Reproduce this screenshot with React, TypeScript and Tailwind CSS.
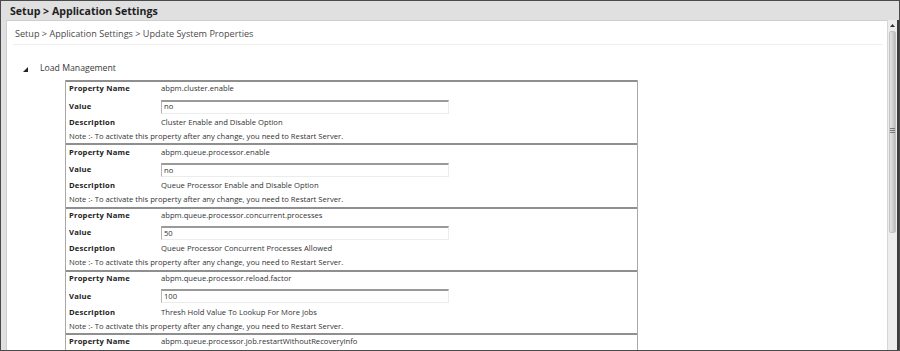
import React from 'react'

const props = [
  { name: 'abpm.cluster.enable', value: 'no', desc: 'Cluster Enable and Disable Option' },
  { name: 'abpm.queue.processor.enable', value: 'no', desc: 'Queue Processor Enable and Disable Option' },
  { name: 'abpm.queue.processor.concurrent.processes', value: '50', desc: 'Queue Processor Concurrent Processes Allowed' },
  { name: 'abpm.queue.processor.reload.factor', value: '100', desc: 'Thresh Hold Value To Lookup For More Jobs' },
  { name: 'abpm.queue.processor.job.restartWithoutRecoveryInfo', value: 'true', desc: 'Restart Job Without Recovery Info' },
]

const NOTE = 'Note :- To activate this property after any change, you need to Restart Server.'

function PropertyBlock({ p }: { p: (typeof props)[number] }) {
  return (
    <div className="border-t-2 border-[#8f8f8f] h-[63.3px] shrink-0 flex flex-col">
      <div className="flex items-center h-[12px] mt-[1px]">
        <span className="w-[95px] pl-[3px] font-bold text-[#222] tracking-[0.2px]">Property Name</span>
        <span className="text-[#333]">{p.name}</span>
      </div>
      <div className="flex items-center h-[19px] pt-[4px]">
        <span className="w-[95px] pl-[3px] font-bold text-[#222] tracking-[0.2px]">Value</span>
        <div className="w-[288px] h-[14px] border border-t-2 border-[#ececec] border-t-[#9a9a9a] border-l-[#b5b5b5] flex items-center pl-[2px] text-[#333]">
          {p.value}
        </div>
      </div>
      <div className="flex items-center h-[17px]">
        <span className="w-[95px] pl-[3px] font-bold text-[#222] tracking-[0.2px]">Description</span>
        <span className="text-[#333]">{p.desc}</span>
      </div>
      <div className="flex items-center h-[11px] pl-[3px] text-[#333]">{NOTE}</div>
    </div>
  )
}

export default function App() {
  return (
    <div className="w-[900px] h-[351px] overflow-hidden border border-[#4a4a4a] bg-[#e0e0e0] flex flex-col font-['Open_Sans',sans-serif]">
      {/* title bar */}
      <div className="h-[19px] shrink-0 flex items-center pl-[9px] pt-[2px] text-[10.6px] font-bold text-[#1e1e1e]">
        Setup &gt; Application Settings
      </div>

      <div className="flex-1 flex min-h-0 pl-[5px]">
        {/* content */}
        <div className="flex-1 bg-white border-l border-t border-[#cfcfcf] pl-[6px] pr-[4px] overflow-hidden">
          <div className="h-[24px] flex items-center border-b border-[#efefef] pl-[2px] pt-[3px] text-[9.1px] text-[#4a4a4a]">
            Setup &gt; Application Settings &gt; Update System Properties
          </div>

          <div className="flex items-center h-[26px] mt-[9px] pt-[4px] text-[8.7px] text-[#3a3a3a]">
            <svg width="5" height="5" viewBox="0 0 5 5" className="ml-[10px] mr-[12px]">
              <polygon points="5,0 5,5 0,5" fill="#222" />
            </svg>
            Load Management
          </div>

          <div className="ml-[52px] w-[573px] border-x border-[#a8a8a8] text-[7.65px] flex flex-col">
            {props.map((p) => (
              <PropertyBlock key={p.name} p={p} />
            ))}
          </div>
        </div>

        {/* scrollbar */}
        <div className="w-[12px] shrink-0 bg-[#ededed] border-l border-[#d6d6d6] border-r-2 border-r-[#3c3c3c] flex flex-col">
          <div className="h-[11px] flex items-center justify-center">
            <svg width="5" height="3" viewBox="0 0 5 3">
              <polygon points="2.5,0 5,3 0,3" fill="#333" />
            </svg>
          </div>
          <div className="h-[202px] mx-[1px] rounded-[2px] border border-[#c2c2c2] bg-gradient-to-r from-[#e6e6e6] via-[#d2d2d2] to-[#bdbdbd] flex items-center justify-center">
            <div className="flex flex-col gap-[1px] mt-[-4px]">
              <div className="w-[5px] h-px bg-[#777]" />
              <div className="w-[5px] h-px bg-[#777]" />
              <div className="w-[5px] h-px bg-[#777]" />
            </div>
          </div>
        </div>
      </div>
    </div>
  )
}
